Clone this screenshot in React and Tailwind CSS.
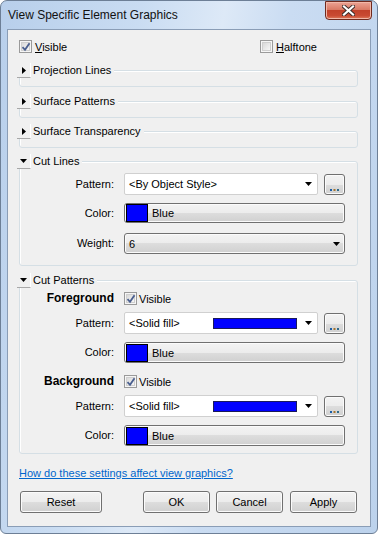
import React from "react";

const BTN =
  "border border-[#707070] rounded-[3px] bg-[linear-gradient(#f3f3f3_0%,#ececec_50%,#dddddd_50%,#d0d0d0_100%)] shadow-[inset_0_0_0_1px_#fbfbfb]";

function Checkbox({ checked }) {
  return (
    <span className="relative inline-flex h-[13px] w-[13px] shrink-0 items-center justify-center border border-[#9a9a9a] bg-[#f6f6f6]">
      <span className="h-[9px] w-[9px] border border-[#cfcfcf] bg-[linear-gradient(135deg,#d9d9d9,#f7f7f7)]" />
      {checked && (
        <svg className="absolute left-[1px] top-[1px]" width="10" height="10" viewBox="0 0 10 10">
          <path d="M1.5 5.2 L4 7.8 L8.5 1.2" fill="none" stroke="#4a5f8f" strokeWidth="1.8" />
        </svg>
      )}
    </span>
  );
}

function RightTri() {
  return (
    <svg width="4" height="7" viewBox="0 0 4 7">
      <path d="M0 0 L4 3.5 L0 7Z" fill="#000" />
    </svg>
  );
}
function DownTri() {
  return (
    <svg width="7" height="4" viewBox="0 0 7 4">
      <path d="M0 0 H7 L3.5 4Z" fill="#000" />
    </svg>
  );
}

function Header({ title, open }) {
  return (
    <div className="absolute left-[-3px] top-[-8px] flex h-[15px] items-center bg-[#f0f0f0] pr-[3px]">
      <div className="flex h-[15px] w-[14px] items-center justify-center border-b border-r border-b-[#a8a8a8] border-r-[#ffffff]">
        {open ? <DownTri /> : <RightTri />}
      </div>
      <span className="ml-[2px] whitespace-nowrap leading-[15px]">{title}</span>
    </div>
  );
}

function Group({ title, open, className = "", children }) {
  return (
    <div className={"relative w-[339px] shrink-0 rounded-[3px] border border-[#d5dfe5] shadow-[inset_1px_1px_0_#ffffff] " + className}>
      <Header title={title} open={open} />
      {children}
    </div>
  );
}

function Label({ children, bold }) {
  return (
    <div className={"w-[94px] shrink-0 whitespace-nowrap text-right leading-[13px] " + (bold ? "text-[12px] font-bold" : "")}>{children}</div>
  );
}

function PatternCombo({ text, fill }) {
  return (
    <div className="flex h-[22px] w-[194px] items-center rounded-[2px] border border-[#d0d0d0] bg-white pl-[4px] pr-[5px]">
      <span className={"whitespace-nowrap " + (fill ? "w-[84px]" : "")}>{text}</span>
      {fill ? <span className="h-[11px] w-[84px] border border-[#1a1a5a] bg-[#0000ff]" /> : null}
      <span className="ml-auto flex items-center">
        <DownTri />
      </span>
    </div>
  );
}

function DotsBtn() {
  return (
    <div className={"ml-[6px] flex h-[21px] w-[21px] items-end justify-center pb-[3px] " + BTN}>
      <svg width="9" height="2" viewBox="0 0 9 2">
        <rect x="0" y="0" width="2" height="2" fill="#1b5ea8" />
        <rect x="3.5" y="0" width="2" height="2" fill="#a4732c" />
        <rect x="7" y="0" width="2" height="2" fill="#2d6a8a" />
      </svg>
    </div>
  );
}

function ColorBtn({ h = "h-[21px]" }) {
  return (
    <div className={"flex w-[221px] items-center pl-[1px] " + h + " " + BTN}>
      <span className="h-[18px] w-[22px] border border-black bg-[#0000ff]" />
      <span className="ml-[4px]">Blue</span>
    </div>
  );
}

function Row({ label, bold, className = "", children }) {
  return (
    <div className={"flex items-center " + className}>
      <Label bold={bold}>{label}</Label>
      <div className="ml-[10px] flex items-center">{children}</div>
    </div>
  );
}

function Button({ children, w }) {
  return (
    <div className={"flex h-[22px] items-center justify-center " + w + " " + BTN}>
      {children}
    </div>
  );
}

export default function App() {
  return (
    <div
      className="flex h-[534px] w-[378px] flex-col rounded-t-[7px] rounded-b-[6px] border border-[#6d7f96] bg-[linear-gradient(100deg,#b8cfeb_0%,#c9dcf2_30%,#dde9f7_48%,#cadcf2_62%,#bcd2ec_100%)] text-[11px] leading-[14px] text-black"
      style={{ fontFamily: '"Liberation Sans", Arial, sans-serif' }}
    >
      <div className="flex h-[28px] shrink-0 items-start">
        <span className="ml-[7px] mt-[7px] text-[12px] leading-[14px] text-[#111]">View Specific Element Graphics</span>
        <div className="ml-auto mr-[5px] flex h-[19px] w-[47px] items-center justify-center rounded-b-[4px] border border-[#702a1e] bg-[linear-gradient(#eba394_0%,#d97a65_45%,#c2412a_50%,#c94a32_80%,#dd7a5c_100%)] shadow-[inset_0_0_0_1px_#f1b7a8]">
          <svg width="13" height="11" viewBox="0 0 13 11">
            <path d="M2 1.5 L11 9.5 M11 1.5 L2 9.5" stroke="#3b2a28" strokeWidth="4" strokeLinecap="square" />
            <path d="M2 1.5 L11 9.5 M11 1.5 L2 9.5" stroke="#ffffff" strokeWidth="2.2" strokeLinecap="square" />
          </svg>
        </div>
      </div>

      <div className="mx-[6px] flex h-[498px] w-[364px] flex-col border border-[#8a9db6] bg-[#f0f0f0] px-[11px]">
        <div className="mt-[10px] flex h-[13px] shrink-0 items-center">
          <div className="flex w-[241px] items-center">
            <Checkbox checked />
            <span className="ml-[3px]">
              <span className="underline">V</span>isible
            </span>
          </div>
          <Checkbox />
          <span className="ml-[3px]">
            <span className="underline">H</span>alftone
          </span>
        </div>

        <Group title="Projection Lines" className="mt-[17px] h-[17px]" />
        <Group title="Surface Patterns" className="mt-[14px] h-[17px]" />
        <Group title="Surface Transparency" className="mt-[13px] h-[17px]" />

        <Group title="Cut Lines" open className="mt-[13px] h-[105px] pt-[11px]">
          <Row label="Pattern:">
            <PatternCombo text="<By Object Style>" />
            <DotsBtn />
          </Row>
          <Row label="Color:" className="mt-[8px]">
            <ColorBtn h="h-[20px]" />
          </Row>
          <Row label="Weight:" className="mt-[10px]">
            <div className={"flex h-[21px] w-[221px] items-center pl-[4px] pr-[4px] " + BTN}>
              <span>6</span>
              <span className="ml-auto flex items-center">
                <DownTri />
              </span>
            </div>
          </Row>
        </Group>

        <Group title="Cut Patterns" open className="mt-[14px] h-[174px] pt-[11px]">
          <Row label="Foreground" bold className="h-[13px]">
            <Checkbox checked />
            <span className="ml-[2px]">Visible</span>
          </Row>
          <Row label="Pattern:" className="mt-[7px]">
            <PatternCombo text="<Solid fill>" fill />
            <DotsBtn />
          </Row>
          <Row label="Color:" className="mt-[8px]">
            <ColorBtn />
          </Row>
          <Row label="Background" bold className="mt-[12px] h-[13px]">
            <Checkbox checked />
            <span className="ml-[2px]">Visible</span>
          </Row>
          <Row label="Pattern:" className="mt-[7px]">
            <PatternCombo text="<Solid fill>" fill />
            <DotsBtn />
          </Row>
          <Row label="Color:" className="mt-[8px]">
            <ColorBtn />
          </Row>
        </Group>

        <div className="mt-[12px] leading-[14px]">
          <span className="text-[#0066cc] underline">How do these settings affect view graphics?</span>
        </div>

        <div className="mt-[11px] flex">
          <div className="ml-[1px]">
            <Button w="w-[82px]">Reset</Button>
          </div>
          <div className="ml-[41px]">
            <Button w="w-[67px]">OK</Button>
          </div>
          <div className="ml-[6px]">
            <Button w="w-[67px]">Cancel</Button>
          </div>
          <div className="ml-[7px]">
            <Button w="w-[67px]">Apply</Button>
          </div>
        </div>
      </div>
    </div>
  );
}
